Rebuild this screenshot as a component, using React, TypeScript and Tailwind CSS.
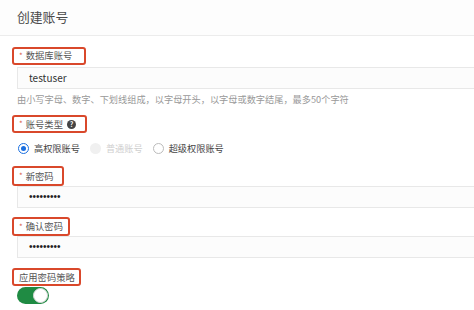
const FONT = "font-['Noto_Sans_CJK_SC','Noto_Sans',sans-serif]";

function Boxed({ children, w }: { children: React.ReactNode; w: string }) {
  // red annotation box around a field label
  return (
    <div className={`-ml-[5px] flex h-[18px] items-center rounded-[3px] border-2 border-[#d9482b] pl-[5px] ${w}`}>
      {children}
    </div>
  );
}

function Label({ text, star = true }: { text: string; star?: boolean }) {
  return (
    <span className="flex items-center text-[9.3px] leading-none text-[#555]">
      {star && <span className="mr-[3px] text-[8px] text-[#d9604a]">*</span>}
      {text}
    </span>
  );
}

function Input({ value, dots }: { value: string; dots?: boolean }) {
  return (
    <div className="flex h-[22px] w-[470px] items-center border border-[#e8e8e8] bg-[#fcfcfc] pl-[11px]">
      {dots ? (
        <span className="font-['Liberation_Sans',sans-serif] text-[10px] leading-none text-[#222]">{value}</span>
      ) : (
        <span className="text-[10px] leading-none text-[#333]">{value}</span>
      )}
    </div>
  );
}

function Radio({ label, checked, disabled }: { label: string; checked?: boolean; disabled?: boolean }) {
  return (
    <div className="flex items-center gap-[5px]">
      {checked ? (
        <span className="flex h-[11px] w-[11px] items-center justify-center rounded-full border border-[#1a6fe0] bg-white">
          <span className="h-[5px] w-[5px] rounded-full bg-[#1a6fe0]" />
        </span>
      ) : disabled ? (
        <span className="h-[11px] w-[11px] rounded-full bg-[#f0f0f0]" />
      ) : (
        <span className="h-[11px] w-[11px] rounded-full border border-[#bbb] bg-white" />
      )}
      <span className={`text-[9.2px] leading-none ${disabled ? 'text-[#cfcfcf]' : 'text-[#444]'}`}>{label}</span>
    </div>
  );
}

export default function App() {
  return (
    <div className={`h-[310px] w-[474px] overflow-hidden bg-white ${FONT}`}>
      <div className="flex h-[36px] items-center border-b border-[#ececec] bg-[#fdfdfd] pl-[17px]">
        <h1 className="text-[12.8px] leading-none text-[#4a4a4a]">创建账号</h1>
      </div>

      <div className="flex flex-col pl-[17px]">
        <div className="mt-[11px]">
          <Boxed w="w-[74px]"><Label text="数据库账号" /></Boxed>
        </div>
        <div className="mt-[2px]"><Input value="testuser" /></div>
        <p className="mt-[6px] text-[9.2px] leading-none text-[#999]">
          由小写字母、数字、下划线组成，以字母开头，以字母或数字结尾，最多50个字符
        </p>

        <div className="mt-[11px]">
          <Boxed w="w-[75px]">
            <Label text="账号类型" />
            <span className="ml-[4px] flex h-[9px] w-[9px] items-center justify-center rounded-full bg-[#444] text-[7px] font-bold leading-none text-white">?</span>
          </Boxed>
        </div>
        <div className="mt-[10px] flex items-center gap-[10px] pl-[1px]">
          <Radio label="高权限账号" checked />
          <Radio label="普通账号" disabled />
          <Radio label="超级权限账号" />
        </div>

        <div className="mt-[12px]">
          <Boxed w="w-[52px] h-[20px]"><Label text="新密码" /></Boxed>
        </div>
        <div><Input value="•••••••••" dots /></div>

        <div className="mt-[9px]">
          <Boxed w="w-[58px] h-[19px]"><Label text="确认密码" /></Boxed>
        </div>
        <div><Input value="•••••••••" dots /></div>

        <div className="mt-[10px]">
          <Boxed w="w-[69px]"><Label text="应用密码策略" star={false} /></Boxed>
        </div>
        <div className="mt-[1px] flex h-[17px] w-[32px] items-center justify-end rounded-full bg-[#1f8b43] pr-[1px]">
          <span className="h-[15px] w-[15px] rounded-full border border-[#d8d8d8] bg-white" />
        </div>
      </div>
    </div>
  );
}
